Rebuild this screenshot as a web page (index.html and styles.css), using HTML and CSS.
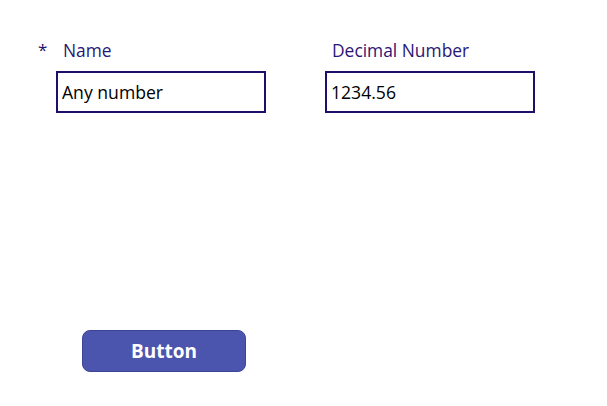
FILE: index.html
```html
<!DOCTYPE html>
<html>
    <head>
        <meta charset="UTF-8">
        <link rel="stylesheet" href="styles.css">
    </head>
    <body>
        <div class="form">
            <div class="field">
                <div class="label-row">
                    <span class="required">*</span>
                    <span class="label">Name</span>
                </div>
                <input class="text-input" type="text" value="Any number">
            </div>
            <div class="field">
                <div class="label-row">
                    <span class="label">Decimal Number</span>
                </div>
                <input class="text-input" type="text" value="1234.56">
            </div>
        </div>
        <div class="button-section">
            <button class="main-button">Button</button>
        </div>
    </body>
</html>
```

FILE: styles.css
```css
body {
    margin: 0;
    font-family: "Open Sans", "Noto Sans", sans-serif;
    background: #ffffff;
}
.form {
    display: flex;
    gap: 59px;
    padding: 38px 0 0 56px;
}
.field {
    width: 210px;
}
.label-row {
    position: relative;
    height: 24px;
    padding-left: 7px;
    margin-bottom: 9px;
}
.required {
    position: absolute;
    left: -18px;
    top: 0;
    font-size: 17px;
    line-height: 24px;
    color: #1f0f6b;
}
.label {
    font-size: 17.4px;
    line-height: 24px;
    color: #2a1675;
}
.text-input {
    box-sizing: border-box;
    width: 210px;
    height: 42px;
    border: 2px solid #1f0f6b;
    border-radius: 0;
    padding: 0 4px;
    font-family: "Open Sans", "Noto Sans", sans-serif;
    font-size: 17.6px;
    color: #000000;
    outline: none;
}
.button-section {
    padding: 217px 0 0 82px;
}
.main-button {
    box-sizing: border-box;
    width: 164px;
    height: 42px;
    background: #4c55ad;
    border: 1px solid #3d4596;
    border-radius: 8px;
    color: #ffffff;
    font-family: "Open Sans", "Noto Sans", sans-serif;
    font-weight: bold;
    font-size: 19px;
}
```
